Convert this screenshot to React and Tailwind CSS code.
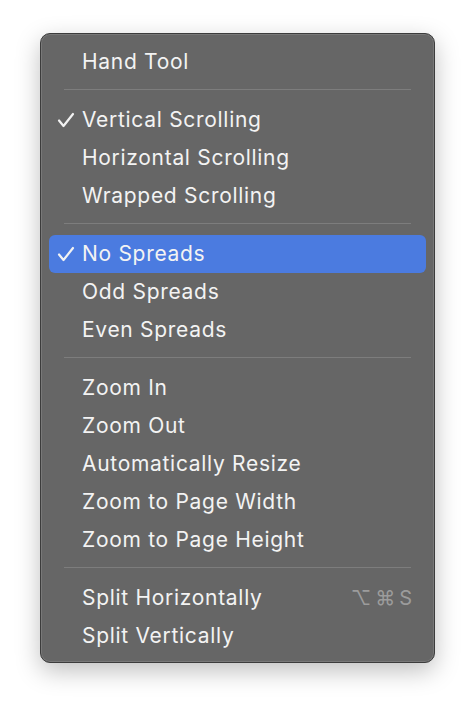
export default function App() {
  const groups = [
    [{ label: "Hand Tool" }],
    [
      { label: "Vertical Scrolling", check: true },
      { label: "Horizontal Scrolling" },
      { label: "Wrapped Scrolling" },
    ],
    [
      { label: "No Spreads", check: true, active: true },
      { label: "Odd Spreads" },
      { label: "Even Spreads" },
    ],
    [
      { label: "Zoom In" },
      { label: "Zoom Out" },
      { label: "Automatically Resize" },
      { label: "Zoom to Page Width" },
      { label: "Zoom to Page Height" },
    ],
    [
      { label: "Split Horizontally", shortcut: "⌥⌘S" },
      { label: "Split Vertically" },
    ],
  ];
  return (
    <div className="w-[474px] h-[711px] bg-white pt-[33px] pl-[40px]" style={{ fontFamily: "Inter, 'Noto Sans', sans-serif" }}>
      <div className="w-[395px] h-[630px] rounded-[10px] bg-[#666666] border border-[#3c3c3c] shadow-[0_0_0_1px_rgba(255,255,255,0.12)_inset,0_8px_24px_rgba(0,0,0,0.25)] px-[8px] py-[9px] flex flex-col">
        {groups.map((g, gi) => (
          <div key={gi} className="flex flex-col">
            {gi > 0 && (
              <div className="h-[20px] flex items-start pt-[8px] px-[15px]">
                <div className="h-px w-full bg-[#7d7d7d]" />
              </div>
            )}
            {g.map((it, i) => (
              <div
                key={i}
                className={`h-[38px] flex items-center rounded-[6px] pl-[8px] pr-[14px] ${it.active ? "bg-[#4b7be0]" : ""}`}
              >
                <div className="w-[25px] flex items-center">
                  {it.check && (
                    <svg width="18" height="16" viewBox="0 0 18 16" fill="none">
                      <path d="M2 8.5 L6.5 14 L16 2" stroke="#f2f2f2" strokeWidth="2.2" strokeLinecap="round" strokeLinejoin="round" />
                    </svg>
                  )}
                </div>
                <span className="text-[21px] text-[#f3f3f3] tracking-[0.7px] flex-1">{it.label}</span>
                {it.shortcut && (
                  <span className="text-[20px] text-[#9c9c9c] tracking-[4px] mr-[-4px]">{it.shortcut}</span>
                )}
              </div>
            ))}
          </div>
        ))}
      </div>
    </div>
  );
}
